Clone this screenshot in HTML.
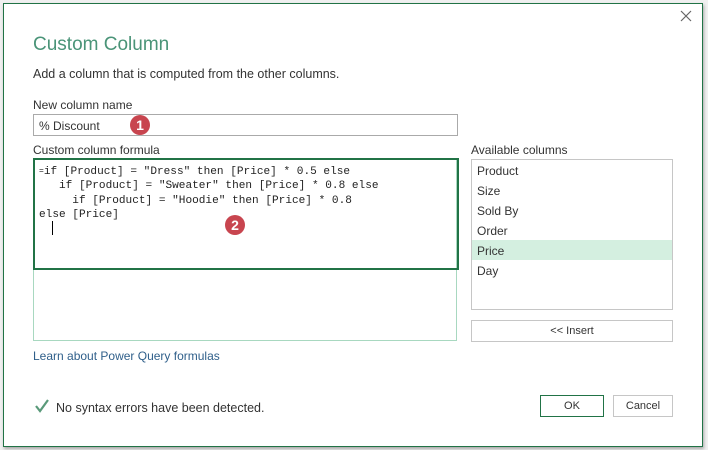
<!DOCTYPE html>
<html><head><style>
body{margin:0;width:708px;height:450px;background:#f0f0f0;position:relative;overflow:hidden;font-family:"Liberation Sans",sans-serif;color:#333}
.a{position:absolute}
.dlg{left:3px;top:3px;width:698px;height:442px;background:#fff;border:1px solid #217346;box-shadow:1px 2px 3px rgba(0,0,0,.3)}
.t{font-size:12px;white-space:nowrap}
.code{font-family:"Liberation Mono",monospace;font-size:11.1px;line-height:14.3px;white-space:pre;color:#222}
.badge{width:20px;height:20px;border-radius:50%;background:#c8454f;color:#fff;font-size:14px;font-weight:bold;text-align:center;line-height:20px}
.li{left:477px;font-size:12px}
.btn{border:1px solid #c6c6c6;background:#fff;font-size:11px;text-align:center;box-sizing:border-box}
</style></head><body>
<div class="a dlg"></div>
<svg class="a" style="left:680px;top:10px" width="12" height="12"><path d="M1 1L11 11M11 1L1 11" stroke="#666" stroke-width="1.2"/></svg>
<div class="a" style="left:33px;top:34px;font-size:19px;color:#4a9478;white-space:nowrap">Custom Column</div>
<div class="a t" style="left:33px;top:67px;font-size:12.5px">Add a column that is computed from the other columns.</div>
<div class="a t" style="left:33px;top:98px">New column name</div>
<div class="a" style="left:33px;top:114px;width:423px;height:20px;border:1px solid #aaa"></div>
<div class="a t" style="left:39px;top:119px">% Discount</div>
<div class="a badge" style="left:130px;top:115px">1</div>
<div class="a t" style="left:33px;top:143px">Custom column formula</div>
<div class="a" style="left:33px;top:159px;width:424px;height:182px;border:1px solid #a8d8c0;box-sizing:border-box"></div>
<div class="a" style="left:33px;top:158px;width:426px;height:112px;border:2px solid #217346;box-sizing:border-box"></div>
<div class="a code" style="left:39px;top:165px"><span style="font-size:8px;vertical-align:top">=</span>if [Product] = "Dress" then [Price] * 0.5 else
   if [Product] = "Sweater" then [Price] * 0.8 else
     if [Product] = "Hoodie" then [Price] * 0.8
else [Price]</div>
<div class="a" style="left:52px;top:221px;width:1px;height:14px;background:#000"></div>
<div class="a badge" style="left:225px;top:215px">2</div>
<div class="a t" style="left:471px;top:143px">Available columns</div>
<div class="a" style="left:471px;top:159px;width:200px;height:149px;border:1px solid #c6c6c6"></div>
<div class="a" style="left:472px;top:240px;width:200px;height:20px;background:#d4efe0"></div>
<div class="a li" style="top:164px">Product</div>
<div class="a li" style="top:184px">Size</div>
<div class="a li" style="top:204px">Sold By</div>
<div class="a li" style="top:224px">Order</div>
<div class="a li" style="top:244px">Price</div>
<div class="a li" style="top:264px">Day</div>
<div class="a btn" style="left:471px;top:320px;width:202px;height:22px;line-height:20px">&lt;&lt; Insert</div>
<div class="a t" style="left:33px;top:349px;color:#2f5f8a">Learn about Power Query formulas</div>
<svg class="a" style="left:34px;top:399px" width="16" height="14"><path d="M2 7 L6 12 L14 1" stroke="#5a9a7a" stroke-width="2.2" fill="none"/></svg>
<div class="a t" style="left:56px;top:401px;font-size:12.5px">No syntax errors have been detected.</div>
<div class="a btn" style="left:540px;top:395px;width:64px;height:22px;line-height:20px;border-color:#217346">OK</div>
<div class="a btn" style="left:613px;top:395px;width:60px;height:22px;line-height:20px">Cancel</div>
</body></html>
